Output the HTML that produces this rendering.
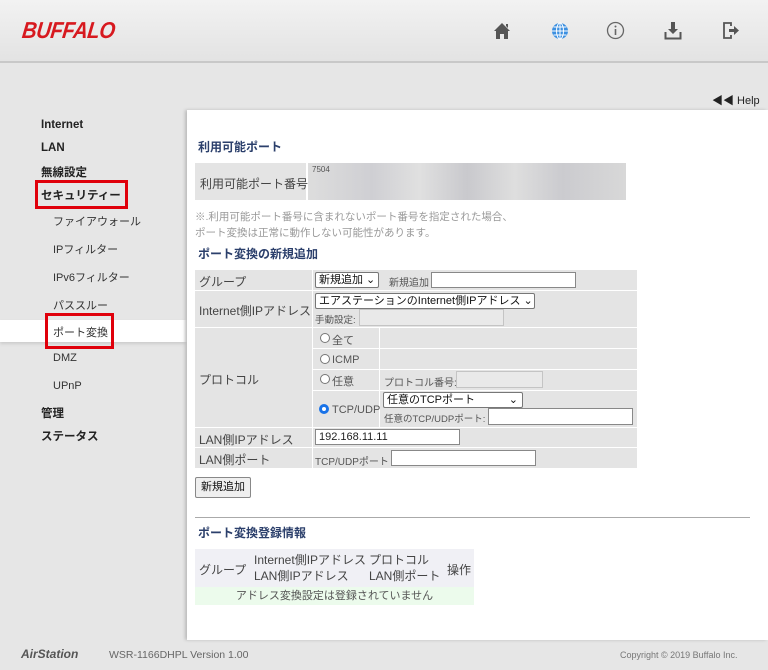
<!DOCTYPE html>
<html><head><meta charset="utf-8"><style>
*{box-sizing:border-box;margin:0;padding:0}
body{width:768px;height:670px;position:relative;background:#e6e6e6;font-family:"Liberation Sans","Noto Sans CJK JP",sans-serif;color:#333;overflow:hidden}
.a{position:absolute}
#hdr{left:0;top:0;width:768px;height:63px;background:linear-gradient(#f2f2f2,#e3e3e3);border-bottom:2px solid #c8c8c8}
.logo{left:24px;top:17px;font:italic bold 23px "Liberation Sans",sans-serif;color:#d7191f;letter-spacing:-0.5px;transform:scaleX(0.88) skewX(-8deg);transform-origin:left top}
.nav{font-size:11.5px;font-weight:bold;color:#222}
.sub{font-size:11px;color:#333}
.redbox{border:3px solid #e0000b}
#panel{left:187px;top:110px;width:581px;height:530px;background:#fff;box-shadow:-2px 0 3px #bbb}
h3{position:absolute;font-size:12px;font-weight:bold;color:#2b3f6b}
.cell{position:absolute;background:#e4e4e4}
.lbl{font-size:12px;color:#444;position:absolute}
.sm{font-size:10px;color:#555;position:absolute}
.inp{position:absolute;background:#fff;border:1px solid #888;height:16px;font-size:11px;padding-left:3px;line-height:14px;color:#222}
.dis{position:absolute;background:#e9e9e9;border:1px solid #c4c4c4;height:17px}
.sel{position:absolute;background:#fff;border:1px solid #777;border-radius:2px;height:16px;font-size:11px;padding-left:3px;line-height:14px;color:#111}
.rad{position:absolute;width:10px;height:10px;border:1px solid #777;border-radius:50%;background:#fff}
</style></head><body>
<div id="hdr" class="a"></div>
<div class="a logo">BUFFALO</div>
<svg class="a" style="left:493px;top:22px" width="18" height="18" viewBox="0 0 18 18"><path d="M9 1 L1 9 H3 V17 H7 V12 H11 V17 H15 V9 H17 Z M13 2 H15 V6 L13 4Z" fill="#555"/></svg>
<svg class="a" style="left:551px;top:22px" width="18" height="18" viewBox="0 0 18 18"><circle cx="9" cy="9" r="8" fill="#3b8fe0"/><g stroke="#fff" stroke-width="1" fill="none"><ellipse cx="9" cy="9" rx="3.5" ry="8"/><path d="M9 1V17M1 9H17M2.5 5H15.5M2.5 13H15.5"/></g></svg>
<svg class="a" style="left:606px;top:21px" width="19" height="19" viewBox="0 0 19 19"><circle cx="9.5" cy="9.5" r="8" fill="none" stroke="#666" stroke-width="1.3"/><rect x="8.7" y="8" width="1.6" height="6" fill="#666"/><circle cx="9.5" cy="5.5" r="1" fill="#666"/></svg>
<svg class="a" style="left:664px;top:21px" width="18" height="19" viewBox="0 0 18 19"><path d="M7 1H11V8H14L9 13L4 8H7Z" fill="#555"/><path d="M1.5 11V17.5H16.5V11" fill="none" stroke="#555" stroke-width="2"/></svg>
<svg class="a" style="left:722px;top:21px" width="18" height="19" viewBox="0 0 18 19"><path d="M9 5V2H2V17H9V14" fill="none" stroke="#555" stroke-width="1.8"/><path d="M7 8H12V5L17 9.5L12 14V11H7Z" fill="#555"/></svg>
<div class="a" style="left:712px;top:92px;font-size:11px;color:#222">◀◀ Help</div>

<div class="a nav" style="left:41px;top:119px">Internet</div>
<div class="a nav" style="left:41px;top:142px">LAN</div>
<div class="a nav" style="left:41px;top:164px">無線設定</div>
<div class="a redbox" style="left:35px;top:180px;width:93px;height:29px"></div>
<div class="a nav" style="left:41px;top:187px">セキュリティー</div>
<div class="a sub" style="left:53px;top:213px">ファイアウォール</div>
<div class="a sub" style="left:53px;top:241px">IPフィルター</div>
<div class="a sub" style="left:53px;top:269px">IPv6フィルター</div>
<div class="a sub" style="left:53px;top:297px">パススルー</div>
<div class="a" style="left:0;top:320px;width:188px;height:22px;background:#fff;box-shadow:0 2px 3px #ccc"></div>
<div class="a redbox" style="left:45px;top:313px;width:69px;height:36px"></div>
<div class="a sub" style="left:53px;top:324px">ポート変換</div>
<div class="a sub" style="left:53px;top:352px">DMZ</div>
<div class="a sub" style="left:53px;top:380px">UPnP</div>
<div class="a nav" style="left:41px;top:405px">管理</div>
<div class="a nav" style="left:41px;top:428px">ステータス</div>

<div id="panel" class="a"></div>
<h3 style="left:198px;top:138px">利用可能ポート</h3>
<div class="cell" style="left:195px;top:163px;width:111px;height:37px"></div>
<div class="lbl" style="left:200px;top:175px">利用可能ポート番号</div>
<div class="cell" style="left:308px;top:163px;width:318px;height:37px;background:linear-gradient(90deg,#ddd,#cfcfd3 20%,#e0e0e0 35%,#c9c9cd 50%,#dedede 65%,#cbcbcf 80%,#d8d8d8)"></div>
<div class="a" style="left:312px;top:165px;font-size:8px;color:#555">7504</div>
<div class="a" style="left:195px;top:209px;font-size:10.5px;color:#999;line-height:16px">※.利用可能ポート番号に含まれないポート番号を指定された場合、<br>ポート変換は正常に動作しない可能性があります。</div>
<h3 style="left:198px;top:245px">ポート変換の新規追加</h3>

<div class="cell" style="left:195px;top:270px;width:117px;height:20px"></div>
<div class="cell" style="left:313px;top:270px;width:324px;height:20px"></div>
<div class="lbl" style="left:199px;top:273px">グループ</div>
<div class="sel" style="left:315px;top:272px;width:64px">新規追加 ⌄</div>
<div class="sm" style="left:389px;top:274px">新規追加</div>
<div class="inp" style="left:431px;top:272px;width:145px"></div>

<div class="cell" style="left:195px;top:291px;width:117px;height:36px"></div>
<div class="cell" style="left:313px;top:291px;width:324px;height:36px"></div>
<div class="lbl" style="left:199px;top:302px">Internet側IPアドレス</div>
<div class="sel" style="left:315px;top:293px;width:220px">エアステーションのInternet側IPアドレス ⌄</div>
<div class="sm" style="left:315px;top:312px;font-size:9.5px">手動設定:</div>
<div class="dis" style="left:359px;top:309px;width:145px"></div>

<div class="cell" style="left:195px;top:328px;width:117px;height:99px"></div>
<div class="lbl" style="left:199px;top:371px">プロトコル</div>
<div class="cell" style="left:313px;top:328px;width:66px;height:20px"></div>
<div class="cell" style="left:380px;top:328px;width:257px;height:20px"></div>
<div class="cell" style="left:313px;top:349px;width:66px;height:20px"></div>
<div class="cell" style="left:380px;top:349px;width:257px;height:20px"></div>
<div class="cell" style="left:313px;top:370px;width:66px;height:20px"></div>
<div class="cell" style="left:380px;top:370px;width:257px;height:20px"></div>
<div class="cell" style="left:313px;top:391px;width:66px;height:36px"></div>
<div class="cell" style="left:380px;top:391px;width:257px;height:36px"></div>
<div class="rad" style="left:320px;top:333px"></div><div class="sm" style="left:332px;top:332px;font-size:11px">全て</div>
<div class="rad" style="left:320px;top:354px"></div><div class="sm" style="left:332px;top:354px;font-size:11px">ICMP</div>
<div class="rad" style="left:320px;top:374px"></div><div class="sm" style="left:332px;top:373px;font-size:11px">任意</div>
<div class="sm" style="left:384px;top:374px">プロトコル番号:</div>
<div class="dis" style="left:456px;top:371px;width:87px"></div>
<div class="rad" style="left:319px;top:404px;border:3px solid #1a73e8"></div><div class="sm" style="left:332px;top:404px;font-size:11px">TCP/UDP</div>
<div class="sel" style="left:383px;top:392px;width:140px">任意のTCPポート<span style="float:right;padding-right:4px">⌄</span></div>
<div class="sm" style="left:384px;top:411px;font-size:9.5px">任意のTCP/UDPポート:</div>
<div class="inp" style="left:488px;top:408px;width:145px;height:17px"></div>

<div class="cell" style="left:195px;top:428px;width:117px;height:19px"></div>
<div class="cell" style="left:313px;top:428px;width:324px;height:19px"></div>
<div class="lbl" style="left:199px;top:431px">LAN側IPアドレス</div>
<div class="inp" style="left:315px;top:429px;width:145px">192.168.11.11</div>
<div class="cell" style="left:195px;top:448px;width:117px;height:20px"></div>
<div class="cell" style="left:313px;top:448px;width:324px;height:20px"></div>
<div class="lbl" style="left:199px;top:451px">LAN側ポート</div>
<div class="sm" style="left:315px;top:453px">TCP/UDPポート</div>
<div class="inp" style="left:391px;top:450px;width:145px"></div>

<div class="a" style="left:195px;top:477px;width:56px;height:21px;border:1px solid #888;border-radius:2px;background:#efefef;font-size:11px;text-align:center;line-height:19px;color:#111">新規追加</div>
<div class="a" style="left:195px;top:517px;width:555px;height:1px;background:#aaa"></div>
<h3 style="left:198px;top:524px">ポート変換登録情報</h3>
<div class="a" style="left:195px;top:549px;width:279px;height:38px;background:#f0f0f5"></div>
<div class="lbl" style="left:199px;top:561px">グループ</div>
<div class="lbl" style="left:254px;top:552px;line-height:16px">Internet側IPアドレス<br>LAN側IPアドレス</div>
<div class="lbl" style="left:369px;top:552px;line-height:16px">プロトコル<br>LAN側ポート</div>
<div class="lbl" style="left:447px;top:561px">操作</div>
<div class="a" style="left:195px;top:587px;width:279px;height:18px;background:#ecfbec;font-size:11px;color:#555;text-align:center;line-height:18px">アドレス変換設定は登録されていません</div>

<div class="a" style="left:21px;top:647px;font:italic bold 12px 'Liberation Sans',sans-serif;color:#555">AirStation</div>
<div class="a" style="left:109px;top:649px;font-size:10.5px;color:#666">WSR-1166DHPL Version 1.00</div>
<div class="a" style="left:620px;top:650px;font-size:9px;color:#777">Copyright © 2019 Buffalo Inc.</div>
</body></html>
